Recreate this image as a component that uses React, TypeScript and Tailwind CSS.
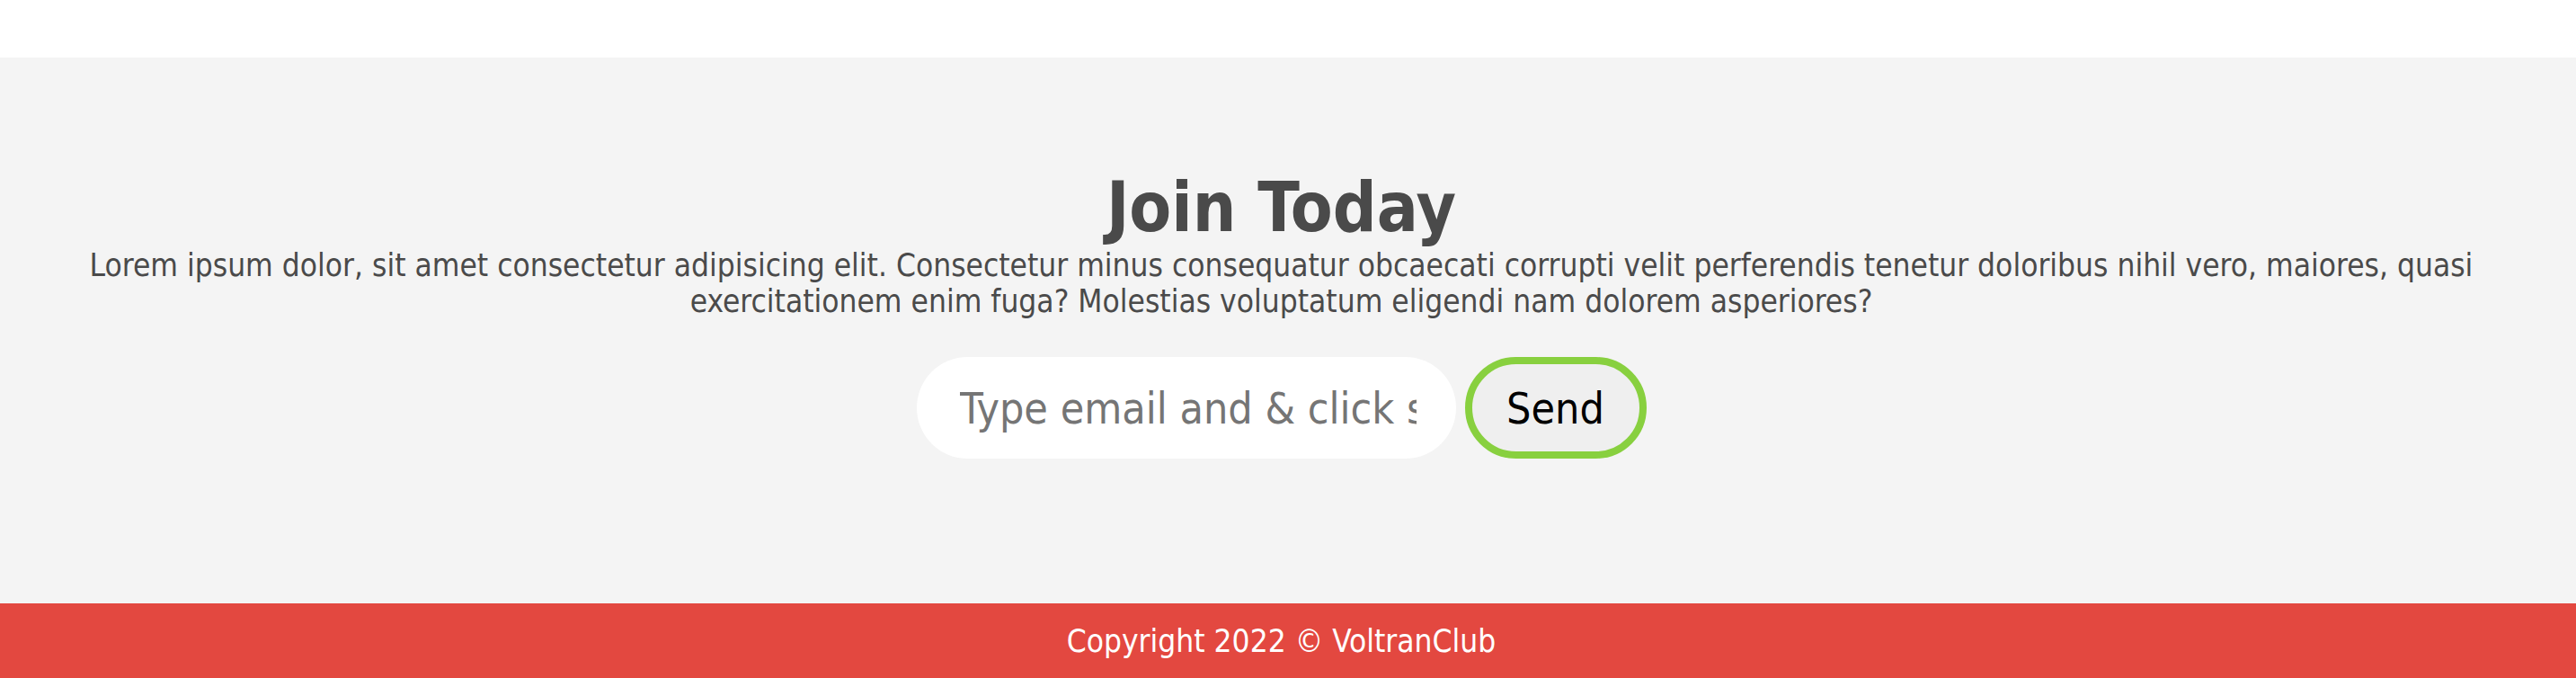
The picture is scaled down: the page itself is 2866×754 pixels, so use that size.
export default function App() {
  return (
    <div className="min-h-screen bg-white font-['DejaVu_Sans_Condensed','DejaVu_Sans',sans-serif] [font-stretch:condensed]">
      <div className="h-[64px] bg-white" />

      <section className="flex h-[607px] flex-col items-center bg-[#f4f4f4] pr-[15px] pt-[129px] text-[#4a4a4a]">
        <h1 className="text-[76px] font-bold leading-[76px]">Join Today</h1>
        <p className="mt-[6px] w-full text-center text-[35px] leading-[40px]">
          Lorem ipsum dolor, sit amet consectetur adipisicing elit. Consectetur
          minus consequatur obcaecati corrupti velit perferendis tenetur
          doloribus nihil vero, maiores, quasi exercitationem enim fuga?
          Molestias voluptatum eligendi nam dolorem asperiores?
        </p>
        <form
          className="mt-[42px] flex gap-[10px]"
          onSubmit={(e) => e.preventDefault()}
        >
          <input
            type="email"
            placeholder="Type email and & click send"
            className="h-[113px] w-[600px] rounded-full bg-white pl-[48px] pr-[44px] text-[48px] text-black outline-none placeholder:text-[#757575]"
          />
          <button
            type="submit"
            className="h-[113px] w-[202px] rounded-full border-[8px] border-[#88d03f] bg-[#efefef] text-[48px] text-black"
          >
            Send
          </button>
        </form>
      </section>

      <footer className="flex h-[83px] items-center justify-center bg-[#e34840] pr-[15px] text-[35px] leading-[40px] text-white">
        Copyright 2022 © VoltranClub
      </footer>
    </div>
  );
}
